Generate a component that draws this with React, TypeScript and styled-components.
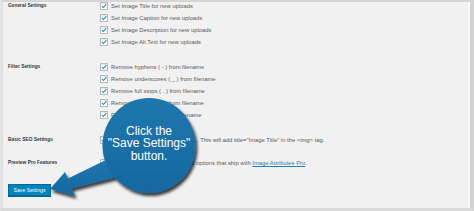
import React from "react";
import styled, { createGlobalStyle } from "styled-components";

const GlobalStyle = createGlobalStyle`
  html, body { margin: 0; padding: 0; background: #f1f1f1; }
  body { font-family: "Liberation Sans", Arial, sans-serif; }
`;

const Page = styled.div`
  position: relative;
  width: 474px;
  height: 211px;
  box-sizing: border-box;
  background: #f1f1f1;
  border-left: 2px solid #e4e4e4;
  border-right: 4px solid #d3d3d3;
  border-bottom: 3px solid #dadada;
  box-shadow: inset 0 2px 0 #d6d6d6, inset -2px 0 0 #f8f8f8, inset 1px 0 0 #dcdcdc;
  padding-left: 4px;
  overflow: hidden;
`;

const Form = styled.div`
  display: flex;
  flex-direction: column;
`;

const Section = styled.div<{ $gap: number }>`
  display: grid;
  grid-template-columns: 94px 1fr;
  margin-top: ${(p) => p.$gap}px;
`;

const Label = styled.div`
  padding-left: 2px;
  font-size: 4.85px;
  font-weight: 700;
  color: #33373b;
  line-height: 12px;
  height: 12px;
  white-space: nowrap;
`;

const Options = styled.div`
  display: flex;
  flex-direction: column;
`;

const OptionRow = styled.div`
  display: flex;
  align-items: center;
  gap: 3px;
  height: 12px;
  font-size: 5.85px;
  color: #5a5a5a;
  white-space: nowrap;
`;

const Box = styled.span`
  display: inline-flex;
  align-items: center;
  justify-content: center;
  width: 6px;
  height: 6px;
  background: #fff;
  border: 0.6px solid #b4b9be;
  box-shadow: inset 0 1px 1px rgba(0, 0, 0, 0.1);
  flex: none;
`;

const Link = styled.span`
  color: #2a7fb0;
  text-decoration: underline;
`;

const SaveButton = styled.div`
  margin-top: 15px;
  margin-left: 2px;
  width: 43px;
  height: 12px;
  box-sizing: border-box;
  background: #0085ba;
  border: 0.6px solid #006799;
  box-shadow: 0 1px 0 #006799;
  color: #fff;
  font-size: 5.2px;
  display: flex;
  align-items: center;
  justify-content: center;
  white-space: nowrap;
`;

const CalloutLayer = styled.div`
  position: absolute;
  left: 0;
  top: 0;
  width: 474px;
  height: 211px;
  pointer-events: none;
`;

const CalloutText = styled.div`
  position: absolute;
  left: 100px;
  top: 98px;
  width: 94px;
  height: 94px;
  display: flex;
  flex-direction: column;
  align-items: center;
  justify-content: center;
  padding-bottom: 3px;
  box-sizing: border-box;
  color: #fff;
  font-family: "Liberation Sans", Arial, sans-serif;
  font-size: 12px;
  text-align: center;
  white-space: nowrap;
`;

const CalloutLine = styled.span`
  display: block;
  height: 12.2px;
  line-height: 12.2px;
`;

const Check = () => (
  <Box>
    <svg width="6" height="6" viewBox="0 0 10 10">
      <path d="M1.5 5.2 L4 7.6 L8.8 1.8" fill="none" stroke="#1e8cbe" strokeWidth="1.8" />
    </svg>
  </Box>
);

const Option = ({ children }: { children: React.ReactNode }) => (
  <OptionRow>
    <Check />
    <span>{children}</span>
  </OptionRow>
);

export default function App() {
  return (
    <>
      <GlobalStyle />
      <Page>
        <Form>
          <Section $gap={0}>
            <Label>General Settings</Label>
            <Options>
              <Option>Set Image Title for new uploads</Option>
              <Option>Set Image Caption for new uploads</Option>
              <Option>Set Image Description for new uploads</Option>
              <Option>Set Image Alt Text for new uploads</Option>
            </Options>
          </Section>
          <Section $gap={13}>
            <Label>Filter Settings</Label>
            <Options>
              <Option>Remove hyphens ( - ) from filename</Option>
              <Option>Remove underscores ( _ ) from filename</Option>
              <Option>Remove full stops ( . ) from filename</Option>
              <Option>Remove commas ( , ) from filename</Option>
              <Option>Remove all numbers from filename</Option>
            </Options>
          </Section>
          <Section $gap={13}>
            <Label>Basic SEO Settings</Label>
            <Options>
              <Option>
                Insert Image Title into post HTML. This will add title="Image Title" in the &lt;img&gt; tag.
              </Option>
            </Options>
          </Section>
          <Section $gap={11}>
            <Label>Preview Pro Features</Label>
            <Options>
              <Option>
                Preview all the new settings and options that ship with <Link>Image Attributes Pro</Link>.
              </Option>
            </Options>
          </Section>
          <SaveButton>Save Settings</SaveButton>
        </Form>
        <CalloutLayer>
          <svg width="474" height="211" viewBox="0 0 474 211">
            <defs>
              <filter id="sh" x="-20%" y="-20%" width="150%" height="150%">
                <feDropShadow dx="2" dy="3" stdDeviation="1.5" floodColor="#000" floodOpacity="0.75" />
              </filter>
              <linearGradient id="bg" x1="0" y1="0" x2="0" y2="1">
                <stop offset="0" stopColor="#1f77ae" />
                <stop offset="1" stopColor="#1568a0" />
              </linearGradient>
            </defs>
            <g filter="url(#sh)" fill="url(#bg)">
              <path d="M48 189 L63 172 L66 178.5 L110 157 L115 177 L69.5 188.5 L73 196 Z" />
              <ellipse cx="147" cy="145.5" rx="46.5" ry="47.5" />
            </g>
          </svg>
          <CalloutText>
            <CalloutLine>Click the</CalloutLine>
            <CalloutLine>"Save Settings"</CalloutLine>
            <CalloutLine>button.</CalloutLine>
          </CalloutText>
        </CalloutLayer>
      </Page>
    </>
  );
}
